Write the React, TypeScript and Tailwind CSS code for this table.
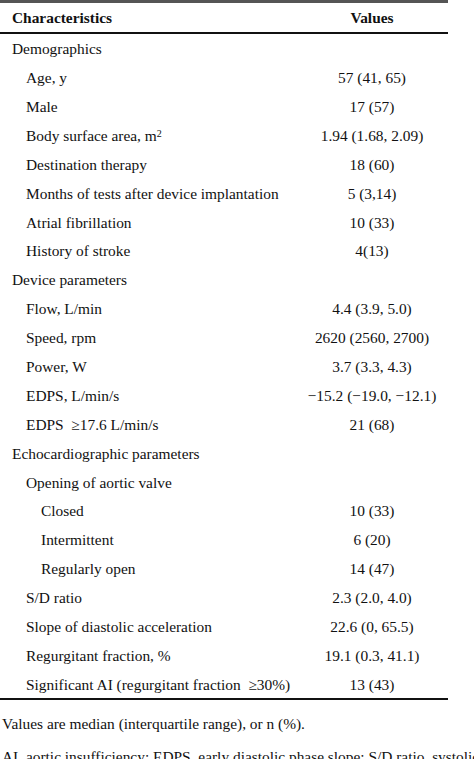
import React from 'react';

type Row = { label: React.ReactNode; value?: string; level: 0 | 1 | 2 };

const rows: Row[] = [
  { label: 'Demographics', level: 0 },
  { label: 'Age, y', value: '57 (41, 65)', level: 1 },
  { label: 'Male', value: '17 (57)', level: 1 },
  {
    label: (
      <>
        Body surface area, m<sup className="text-[10px] relative -top-[4px] align-baseline">2</sup>
      </>
    ),
    value: '1.94 (1.68, 2.09)',
    level: 1,
  },
  { label: 'Destination therapy', value: '18 (60)', level: 1 },
  { label: 'Months of tests after device implantation', value: '5 (3,14)', level: 1 },
  { label: 'Atrial fibrillation', value: '10 (33)', level: 1 },
  { label: 'History of stroke', value: '4(13)', level: 1 },
  { label: 'Device parameters', level: 0 },
  { label: 'Flow, L/min', value: '4.4 (3.9, 5.0)', level: 1 },
  { label: 'Speed, rpm', value: '2620 (2560, 2700)', level: 1 },
  { label: 'Power, W', value: '3.7 (3.3, 4.3)', level: 1 },
  { label: 'EDPS, L/min/s', value: '\u221215.2 (\u221219.0, \u221212.1)', level: 1 },
  { label: 'EDPS  \u226517.6 L/min/s', value: '21 (68)', level: 1 },
  { label: 'Echocardiographic parameters', level: 0 },
  { label: 'Opening of aortic valve', level: 1 },
  { label: 'Closed', value: '10 (33)', level: 2 },
  { label: 'Intermittent', value: '6 (20)', level: 2 },
  { label: 'Regularly open', value: '14 (47)', level: 2 },
  { label: 'S/D ratio', value: '2.3 (2.0, 4.0)', level: 1 },
  { label: 'Slope of diastolic acceleration', value: '22.6 (0, 65.5)', level: 1 },
  { label: 'Regurgitant fraction, %', value: '19.1 (0.3, 41.1)', level: 1 },
  { label: 'Significant AI (regurgitant fraction  \u226530%)', value: '13 (43)', level: 1 },
];

const indent = ['pl-[12px]', 'pl-[26px]', 'pl-[41px]'];

export default function App() {
  return (
    <div className="w-[474px] bg-white text-[#111] text-[15.4px] font-['Liberation_Serif',serif] leading-none">
      <div className="w-[448px]">
        <div className="h-[3px] bg-[#555]" />
        {/* Header */}
        <div className="flex items-center h-[31px] pt-[1px] font-bold border-b-2 border-[#111]">
          <div className="flex-1 pl-[12px]">Characteristics</div>
          <div className="w-[152px] text-center">Values</div>
        </div>
        {rows.map((row, i) => (
          <div key={i} className="flex items-center h-[28.9px] pt-[1px]">
            <div className={`flex-1 whitespace-pre ${indent[row.level]}`}>{row.label}</div>
            <div className="w-[152px] text-center whitespace-pre">{row.value}</div>
          </div>
        ))}
        <div className="h-[2px] bg-[#111]" />
      </div>
      <div className="pl-[2px] pt-[16px] whitespace-nowrap">
        <p>Values are median (interquartile range), or n (%).</p>
        <p className="mt-[17px]">AI, aortic insufficiency; EDPS, early diastolic phase slope; S/D ratio, systolic</p>
      </div>
    </div>
  );
}
